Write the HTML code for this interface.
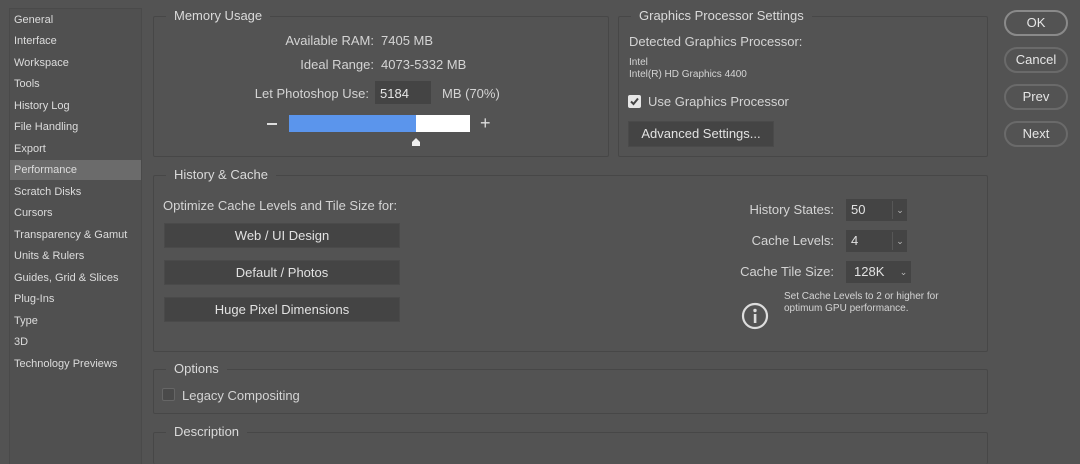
<!DOCTYPE html><html style="width:1080px;height:464px;overflow:hidden"><head><style>
*{margin:0;padding:0;box-sizing:border-box}
body{width:1080px;height:464px;background:#535353;font-family:"Liberation Sans",sans-serif;color:#d4d4d4;position:relative;overflow:hidden;font-size:13px}
.a{position:absolute;white-space:nowrap}
.side{position:absolute;left:9px;top:8px;width:133px;height:456px;border:1px solid #4a4a4a;border-bottom:0;background:#505050}
.side div{position:absolute;left:4px;font-size:11px;color:#dcdcdc;width:127px;height:20px;line-height:20px}
.grp{position:absolute;border:1px solid #474747;border-radius:2px}
.gt{position:absolute;background:#535353;padding:0 8px;font-size:13px;color:#dadada;top:-9px;left:12px;line-height:16px}
.btn{position:absolute;background:#444;border:1px solid #4a4a4a;text-align:center;color:#e2e2e2;font-size:13px}
.rb{position:absolute;left:1004px;width:64px;height:26px;border:2px solid #6a6a6a;border-radius:13px;text-align:center;line-height:22px;color:#e6e6e6;font-size:13px}
.sel{position:absolute;background:#444;height:22px;line-height:22px;padding-left:5px;color:#e2e2e2}
.sel i{position:absolute;right:0;top:2px;bottom:2px;width:15px;border-left:1px solid #575757;font-style:normal;font-size:9px;text-align:center;line-height:18px;color:#bbb}
</style></head><body>
<div class="side">
<div style="top:1px">General</div><div style="top:22px">Interface</div><div style="top:44px">Workspace</div><div style="top:65px">Tools</div><div style="top:87px">History Log</div><div style="top:108px">File Handling</div><div style="top:130px">Export</div>
<div style="top:151px;left:0;padding-left:4px;width:131px;background:#6b6b6b">Performance</div>
<div style="top:173px">Scratch Disks</div><div style="top:194px">Cursors</div><div style="top:216px">Transparency &amp; Gamut</div><div style="top:237px">Units &amp; Rulers</div><div style="top:259px">Guides, Grid &amp; Slices</div><div style="top:280px">Plug-Ins</div><div style="top:302px">Type</div><div style="top:323px">3D</div><div style="top:345px">Technology Previews</div>
</div>

<div class="grp" style="left:153px;top:16px;width:456px;height:141px"><div class="gt">Memory Usage</div></div>
<div class="a" style="right:706px;top:33px">Available RAM:</div><div class="a" style="left:381px;top:33px">7405 MB</div>
<div class="a" style="right:706px;top:57px">Ideal Range:</div><div class="a" style="left:381px;top:57px">4073-5332 MB</div>
<div class="a" style="right:711px;top:86px">Let Photoshop Use:</div>
<div class="a" style="left:375px;top:81px;width:56px;height:23px;background:#444;padding:5px 0 0 5px;color:#e6e6e6">5184</div>
<div class="a" style="left:442px;top:86px">MB (70%)</div>
<div class="a" style="left:267px;top:123px;width:10px;height:2px;background:#ddd"></div>
<div class="a" style="left:289px;top:115px;width:127px;height:17px;background:#5b95ec"></div>
<div class="a" style="left:416px;top:115px;width:54px;height:17px;background:#fff"></div>
<div class="a" style="left:480px;top:113px;font-size:18px;color:#ddd">+</div>
<svg class="a" style="left:410px;top:136px" width="12" height="11"><path d="M2 10V6L6 2L10 6V10Z" fill="#eee"/></svg>

<div class="grp" style="left:618px;top:16px;width:370px;height:141px"><div class="gt">Graphics Processor Settings</div></div>
<div class="a" style="left:629px;top:34px">Detected Graphics Processor:</div>
<div class="a" style="left:629px;top:57px;font-size:10px;line-height:12px">Intel<br>Intel(R) HD Graphics 4400</div>
<div class="a" style="left:628px;top:95px;width:13px;height:13px;background:#e6e6e6;border-radius:2px"><svg width="13" height="13"><path d="M3 6.5L5.5 9L10 3.5" stroke="#444" stroke-width="2" fill="none"/></svg></div>
<div class="a" style="left:648px;top:94px">Use Graphics Processor</div>
<div class="btn" style="left:628px;top:121px;width:146px;height:26px;line-height:24px">Advanced Settings...</div>

<div class="rb" style="top:10px;border-color:#8a8a8a">OK</div>
<div class="rb" style="top:47px">Cancel</div>
<div class="rb" style="top:84px">Prev</div>
<div class="rb" style="top:121px">Next</div>

<div class="grp" style="left:153px;top:175px;width:835px;height:177px"><div class="gt">History &amp; Cache</div></div>
<div class="a" style="left:163px;top:198px">Optimize Cache Levels and Tile Size for:</div>
<div class="btn" style="left:164px;top:223px;width:236px;height:25px;line-height:23px">Web / UI Design</div>
<div class="btn" style="left:164px;top:260px;width:236px;height:25px;line-height:23px">Default / Photos</div>
<div class="btn" style="left:164px;top:297px;width:236px;height:25px;line-height:23px">Huge Pixel Dimensions</div>
<div class="a" style="right:246px;top:202px">History States:</div>
<div class="sel" style="left:846px;top:199px;width:61px">50<i>⌄</i></div>
<div class="a" style="right:246px;top:233px">Cache Levels:</div>
<div class="sel" style="left:846px;top:230px;width:61px">4<i>⌄</i></div>
<div class="a" style="right:246px;top:264px">Cache Tile Size:</div>
<div class="sel" style="left:846px;top:261px;width:65px;padding-left:8px">128K<i style="border:0">⌄</i></div>
<svg class="a" style="left:741px;top:302px" width="28" height="28"><circle cx="14" cy="14" r="12" stroke="#ddd" stroke-width="2.2" fill="none"/><circle cx="14" cy="8.5" r="1.7" fill="#ddd"/><rect x="12.8" y="12" width="2.6" height="9" fill="#ddd"/></svg>
<div class="a" style="left:784px;top:291px;font-size:10px;line-height:12px">Set Cache Levels to 2 or higher for<br>optimum GPU performance.</div>

<div class="grp" style="left:153px;top:369px;width:835px;height:45px"><div class="gt">Options</div></div>
<div class="a" style="left:162px;top:388px;width:13px;height:13px;border:1px solid #666;background:#4a4a4a;border-radius:2px"></div>
<div class="a" style="left:182px;top:388px">Legacy Compositing</div>

<div class="grp" style="left:153px;top:432px;width:835px;height:32px;border-bottom:0"><div class="gt">Description</div></div>
</body></html>
